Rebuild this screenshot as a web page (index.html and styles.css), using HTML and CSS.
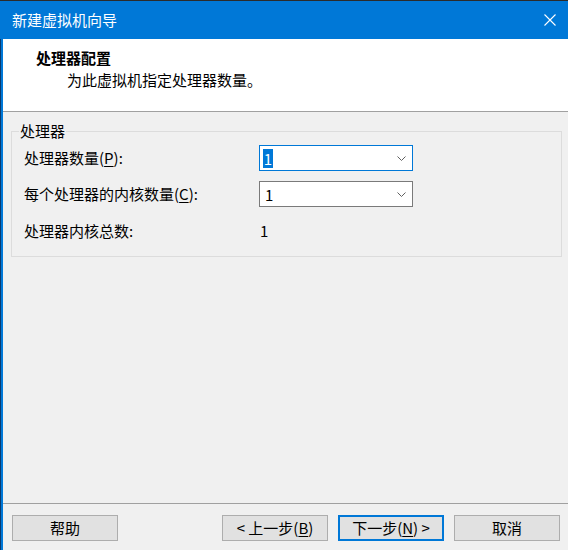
FILE: index.html
```html
<!DOCTYPE html>
<html lang="zh-CN">
<head>
<meta charset="utf-8">
<title>新建虚拟机向导</title>
<link rel="stylesheet" href="styles.css">
</head>
<body>
<div class="window">
  <div class="titlebar">
    <span class="title">新建虚拟机向导</span>
    <svg class="close" width="12" height="12" viewBox="0 0 12 12"><path d="M0.5 0.5L11.5 11.5M11.5 0.5L0.5 11.5" stroke="#ffffff" stroke-width="1.1" fill="none"/></svg>
  </div>
  <div class="client">
    <div class="inner">
      <div class="header">
        <div class="h-title">处理器配置</div>
        <div class="h-sub">为此虚拟机指定处理器数量。</div>
      </div>
      <div class="main">
        <fieldset class="group">
          <legend>处理器</legend>
          <div class="grid">
            <label class="lbl">处理器数量(<u>P</u>):</label>
            <div class="combo focused"><span class="val sel">1</span><svg class="chev" width="9" height="5" viewBox="0 0 9 5"><path d="M0.5 0.5L4.5 4.5L8.5 0.5" stroke="#606060" stroke-width="1" fill="none"/></svg></div>
            <label class="lbl">每个处理器的内核数量(<u>C</u>):</label>
            <div class="combo"><span class="val">1</span><svg class="chev" width="9" height="5" viewBox="0 0 9 5"><path d="M0.5 0.5L4.5 4.5L8.5 0.5" stroke="#606060" stroke-width="1" fill="none"/></svg></div>
            <div class="lbl total">处理器内核总数:</div>
            <div class="total-val">1</div>
          </div>
        </fieldset>
      </div>
      <div class="footer">
        <button class="btn">帮助</button>
        <div class="spacer"></div>
        <button class="btn">&lt; 上一步(<u>B</u>)</button>
        <button class="btn default">下一步(<u>N</u>) &gt;</button>
        <button class="btn">取消</button>
      </div>
    </div>
  </div>
</div>
</body>
</html>
```

FILE: styles.css
```css
html, body {
  margin: 0;
  padding: 0;
  background: #f0f0f0;
}
body {
  font-family: "Noto Sans CJK SC", "Microsoft YaHei UI", "Noto Sans", sans-serif;
  font-size: 15px;
  color: #000;
}
.window {
  width: 568px;
  height: 550px;
  box-sizing: border-box;
  border-top: 1px solid #2b2b2b;
  display: flex;
  flex-direction: column;
  overflow: hidden;
}
.titlebar {
  height: 38px;
  flex: none;
  background: #0078d7;
  color: #fff;
  display: flex;
  align-items: center;
  justify-content: space-between;
  padding: 0 12px;
}
.title {
  line-height: 20px;
  font-size: 15px;
}
.close {
  display: block;
}
.client {
  flex: 1;
  display: flex;
  border-left: 1px solid #0b3a6e;
  min-height: 0;
}
.inner {
  flex: 1;
  display: flex;
  flex-direction: column;
  border-left: 2px solid #0078d7;
}
.header {
  height: 73px;
  box-sizing: border-box;
  flex: none;
  background: #fff;
  border-bottom: 1px solid #a0a0a0;
  padding-top: 9px;
}
.h-title {
  font-weight: bold;
  line-height: 20px;
  padding-left: 33px;
}
.h-sub {
  line-height: 20px;
  margin-top: 2px;
  padding-left: 64px;
}
.main {
  flex: 1;
  background: #f0f0f0;
  border-bottom: 1px solid #a0a0a0;
}
.group {
  margin: 9px 6px 0 8px;
  border: 1px solid #dcdcdc;
  padding: 4px 0 13px 7px;
}
.group legend {
  padding: 0 1px;
  line-height: 20px;
}
.grid {
  display: grid;
  grid-template-columns: 240px 154px;
  grid-auto-rows: 26px;
  row-gap: 10px;
  align-items: center;
}
.lbl {
  padding-left: 5px;
  line-height: 20px;
}
.total, .total-val {
  margin-top: 1px;
}
.total-val {
  padding-left: 1px;
}
.combo {
  height: 26px;
  box-sizing: border-box;
  border: 1px solid #7a7a7a;
  background: #fff;
  display: flex;
  align-items: center;
  padding-left: 3px;
  padding-right: 6px;
}
.combo.focused {
  border-color: #0078d7;
}
.val {
  display: inline-block;
  line-height: 19px;
  padding-left: 2px;
}
.val.sel {
  background: #0078d7;
  color: #fff;
  width: 10px;
  padding-left: 0;
  text-align: center;
}
.chev {
  display: block;
  margin-left: auto;
}
.footer {
  height: 46px;
  box-sizing: border-box;
  flex: none;
  background: #f0f0f0;
  display: flex;
  align-items: flex-start;
  gap: 10px;
  padding: 11px 8px 0 9px;
}
.spacer {
  flex: 1;
}
.btn {
  width: 106px;
  height: 26px;
  box-sizing: border-box;
  background: #e1e1e1;
  border: 1px solid #adadad;
  font-family: inherit;
  font-size: 15px;
  color: #000;
  padding: 0;
  line-height: 20px;
  border-radius: 0;
}
.btn.default {
  border: 2px solid #0078d7;
}
u {
  text-underline-offset: 2px;
}
```
